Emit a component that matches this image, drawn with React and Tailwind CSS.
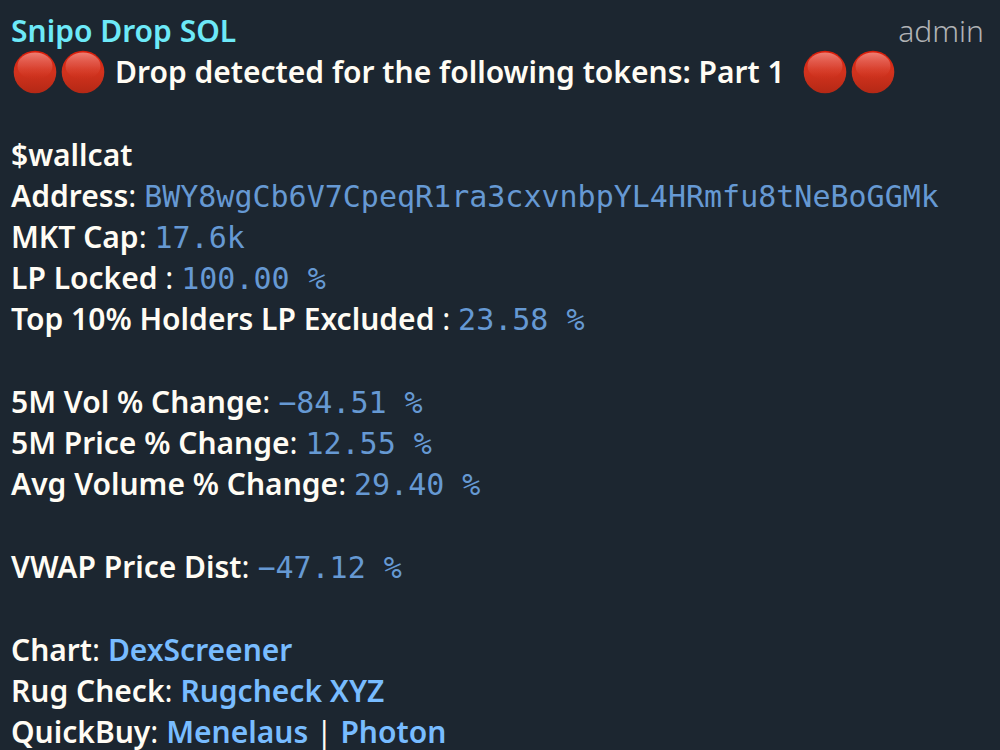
import React from "react";

const groups = [
  [
    { label: "Address", value: "BWY8wgCb6V7CpeqR1ra3cxvnbpYL4HRmfu8tNeBoGGMk" },
    { label: "MKT Cap", value: "17.6k" },
    { label: "LP Locked ", value: "100.00 %" },
    { label: "Top 10% Holders LP Excluded ", value: "23.58 %" },
  ],
  [
    { label: "5M Vol % Change", value: "-84.51 %" },
    { label: "5M Price % Change", value: "12.55 %" },
    { label: "Avg Volume % Change", value: "29.40 %" },
  ],
  [{ label: "VWAP Price Dist", value: "-47.12 %" }],
];

const linkGroups = [
  { label: "Chart", links: ["DexScreener"] },
  { label: "Rug Check", links: ["Rugcheck XYZ"] },
  { label: "QuickBuy", links: ["Menelaus", "Photon"] },
];

const RedCircles = () => (
  <span className="flex gap-1">
    {[0, 1].map((i) => (
      <svg key={i} className="size-11" viewBox="0 0 44 44" aria-hidden="true">
        <defs>
          <linearGradient id="ball" x1="0" y1="0" x2="0" y2="1">
            <stop offset="0" stopColor="#dc1c08" />
            <stop offset="0.5" stopColor="#d2331e" />
            <stop offset="1" stopColor="#b42815" />
          </linearGradient>
          <linearGradient id="shine" x1="0" y1="0" x2="0" y2="1">
            <stop offset="0" stopColor="#f08a80" stopOpacity="0.9" />
            <stop offset="0.5" stopColor="#e26052" stopOpacity="0.6" />
            <stop offset="1" stopColor="#d2331e" stopOpacity="0" />
          </linearGradient>
        </defs>
        <circle cx="22" cy="22" r="21.3" fill="url(#ball)" />
        <ellipse cx="22" cy="16" rx="17.5" ry="13.5" fill="url(#shine)" />
      </svg>
    ))}
  </span>
);

const Label = ({ children }) => (
  <>
    <span className="font-semibold">{children}</span>
    {": "}
  </>
);

const Row = ({ label, value }) => (
  <p className="whitespace-pre">
    <Label>{label}</Label>
    <span className="font-['DejaVu_Sans_Mono',monospace] text-[30px] leading-none text-[#6699d3]">
      {value.replace("-", "−")}
    </span>
  </p>
);

const App = () => {
  return (
    <main className="min-h-screen overflow-hidden bg-[#1c2630] pl-[11px] pr-4 pt-[10px] font-['Noto_Sans','Open_Sans',sans-serif] text-[30px] leading-[41px] text-[#fffcf4]">
      <header className="flex justify-between">
        <h1 className="font-semibold text-[#6de9f8]">Snipo Drop SOL</h1>
        <span className="font-light text-[#b0b2b5]">admin</span>
      </header>

      <div className="flex h-[41px] items-center whitespace-pre pl-[2px]">
        <RedCircles />
        <h2 className="ml-[10px] mr-[18px] font-semibold">
          Drop detected for the following tokens: Part 1
        </h2>
        <RedCircles />
      </div>

      <div className="mt-[42px] flex flex-col gap-[42px]">
        <section>
          <h3 className="font-semibold">$wallcat</h3>
          {groups[0].map((row) => (
            <Row key={row.label} {...row} />
          ))}
        </section>
        {groups.slice(1).map((rows) => (
          <section key={rows[0].label}>
            {rows.map((row) => (
              <Row key={row.label} {...row} />
            ))}
          </section>
        ))}
        <section>
          {linkGroups.map(({ label, links }) => (
            <p key={label}>
              <Label>{label}</Label>
              {links.map((link, i) => (
                <React.Fragment key={link}>
                  {i > 0 && " | "}
                  <a href="#" className="font-semibold text-[#78bcff]">
                    {link}
                  </a>
                </React.Fragment>
              ))}
            </p>
          ))}
        </section>
      </div>
    </main>
  );
};

export default App;
